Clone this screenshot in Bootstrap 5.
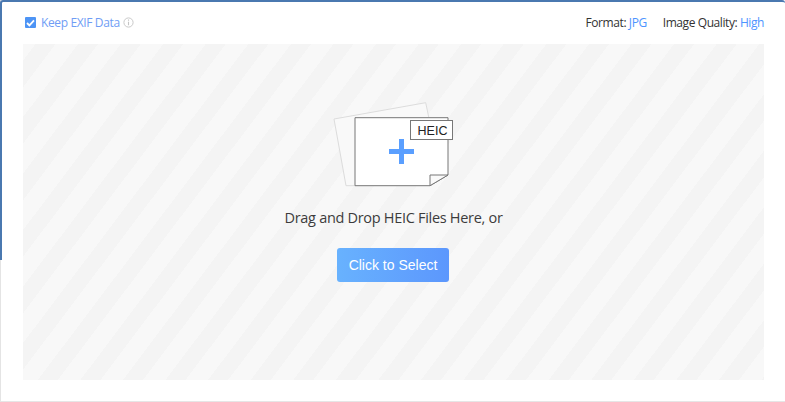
<!DOCTYPE html>
<html lang="en">
<head>
    <meta charset="UTF-8">
    <meta name="viewport" content="width=device-width, initial-scale=1.0">
    <title>HEIC to JPG</title>
    <link href="https://cdn.jsdelivr.net/npm/bootstrap@5.3.0/dist/css/bootstrap.min.css" rel="stylesheet">
    <style>
        body {
            background: #fff;
            font-family: "Open Sans", "Liberation Sans", sans-serif;
            overflow: hidden;
        }
        .upload-panel {
            position: relative;
            height: 402px;
            padding: 0 21px 0 22px;
            background: #fff;
            border-left: 1px solid #e4e4e4;
            border-bottom: 1px solid #e6e6e6;
        }
        /* blue frame of the page behind the panel */
        .upload-panel::before {
            content: "";
            position: absolute;
            left: -1px;
            top: 0;
            right: 0;
            height: 260px;
            border-top: 2px solid #4a78b0;
            border-left: 2px solid #4a78b0;
            border-top-left-radius: 3px;
            border-top-right-radius: 3px;
            pointer-events: none;
        }
        .options-bar {
            height: 44px;
            font-size: 12px;
            letter-spacing: -0.42px;
            color: #333;
            padding-top: 1px;
        }
        .exif-box {
            width: 11px;
            height: 11px;
            border-radius: 1px;
            background: #4d94f5;
            margin-left: 2px;
        }
        .exif-label { color: #6f9df5; margin-left: 5px; letter-spacing: -0.37px; }
        .exif-info { margin-left: 3px; }
        .opt-value { color: #4d94ff; }
        .drop-area {
            height: 336px;
            background: repeating-linear-gradient(127deg, #f8f8f8 0, #f8f8f8 10px, #f4f4f4 10px, #f4f4f4 26px, #f8f8f8 26px, #f8f8f8 34px);
        }
        .file-art { margin-top: 58px; }
        .drop-text {
            font-size: 14.5px;
            letter-spacing: -0.3px;
            color: #3c3c3c;
            margin-top: 21px;
            line-height: 20px;
        }
        .select-btn {
            width: 112px;
            height: 34px;
            margin: 20px 1px 0 0;
            padding: 0;
            border: 0;
            border-radius: 3px;
            color: #fff;
            font-family: "Liberation Sans", Arial, sans-serif;
            font-size: 14px;
            background: linear-gradient(90deg, #68b2fe, #5c97fd);
        }
        .select-btn:hover { color: #fff; }
    </style>
</head>
<body>
    <div class="upload-panel">
        <div class="options-bar d-flex justify-content-between align-items-center">
            <div class="d-flex align-items-center">
                <span class="exif-box d-inline-flex align-items-center justify-content-center">
                    <svg width="9" height="8" viewBox="0 0 9 8"><path d="M1 4l2.4 2.4L8 1.4" fill="none" stroke="#fff" stroke-width="1.8"/></svg>
                </span>
                <span class="exif-label">Keep EXIF Data</span>
                <svg class="exif-info" width="11" height="11" viewBox="0 0 11 11">
                    <circle cx="5.5" cy="5.5" r="4.6" fill="none" stroke="#c9c9c9"/>
                    <path d="M5.5 2.6v1.2M5.5 4.8v3.4" stroke="#c4c4c4" stroke-width="1.1"/>
                </svg>
            </div>
            <div class="d-flex gap-3">
                <span>Format: <span class="opt-value">JPG</span></span>
                <span>Image Quality: <span class="opt-value">High</span></span>
            </div>
        </div>
        <div class="drop-area d-flex flex-column align-items-center">
            <svg class="file-art" width="121" height="85" viewBox="0 0 121 85">
                <path d="M22 83.7H13L1 17L92.7 0.7L95.7 15" fill="#f9f9f9" stroke="#dcdcdc"/>
                <path d="M22 15.7H115V73L97 83.7H22Z" fill="#fff" stroke="#777"/>
                <path d="M97 83.7V73H115Z" fill="#fafafa" stroke="#777"/>
                <rect x="77.5" y="18.5" width="42" height="19" fill="#fff" stroke="#777"/>
                <text x="99.5" y="33" text-anchor="middle" font-family="Liberation Sans, Arial, sans-serif" font-size="12.5" fill="#222">HEIC</text>
                <path d="M56 49.5H81M68.5 37V62" stroke="#5a9fff" stroke-width="5"/>
            </svg>
            <div class="drop-text">Drag and Drop HEIC Files Here, or</div>
            <button type="button" class="btn select-btn">Click to Select</button>
        </div>
    </div>
    <script src="https://cdn.jsdelivr.net/npm/bootstrap@5.3.0/dist/js/bootstrap.bundle.min.js"></script>
</body>
</html>
